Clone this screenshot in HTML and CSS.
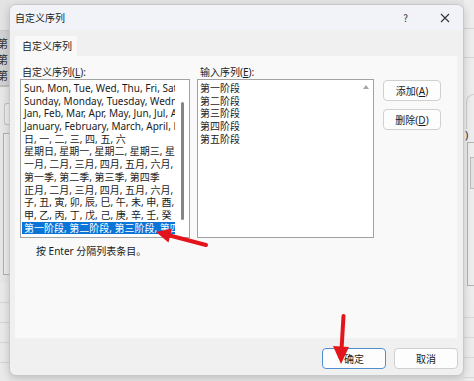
FILE: index.html
```html
<!DOCTYPE html>
<html lang="zh-CN">
<head>
  <meta charset="UTF-8">
  <title>自定义序列</title>
  <link rel="stylesheet" href="styles.css">
</head>
<body>
<div class="desk">
  <!-- 背后的工作表(左侧露出部分) -->
  <div class="sheet-left">
    <div class="sl-top"></div>
    <div class="sl-rows">
      <span>第</span><span>第</span><span>第</span>
    </div>
    <div class="sl-box"></div>
    <div class="sl-frame"></div>
    <div class="sl-grid"></div>
  </div>

  <!-- 对话框 -->
  <div class="dialog">
    <div class="titlebar">
      <span class="title">自定义序列</span>
      <span class="help">?</span>
      <span class="close">
        <svg width="10" height="10" viewBox="0 0 10 10"><path d="M1 1 L9 9 M9 1 L1 9" stroke="#333" stroke-width="1.1" fill="none"/></svg>
      </span>
    </div>

    <div class="tabs">
      <div class="tab">自定义序列</div>
    </div>

    <div class="panel">
      <div class="cols">
        <div class="col col-left">
          <label>自定义序列(<u>L</u>):</label>
          <div class="listbox">
            <div class="items">
              <div class="item">Sun, Mon, Tue, Wed, Thu, Fri, Sat</div>
              <div class="item">Sunday, Monday, Tuesday, Wednesday, Thursday</div>
              <div class="item">Jan, Feb, Mar, Apr, May, Jun, Jul, Aug, Sep</div>
              <div class="item">January, February, March, April, May, June</div>
              <div class="item">日, 一, 二, 三, 四, 五, 六</div>
              <div class="item">星期日, 星期一, 星期二, 星期三, 星期四</div>
              <div class="item">一月, 二月, 三月, 四月, 五月, 六月, 七月</div>
              <div class="item">第一季, 第二季, 第三季, 第四季</div>
              <div class="item">正月, 二月, 三月, 四月, 五月, 六月, 七月</div>
              <div class="item">子, 丑, 寅, 卯, 辰, 巳, 午, 未, 申, 酉, 戌, 亥</div>
              <div class="item">甲, 乙, 丙, 丁, 戊, 己, 庚, 辛, 壬, 癸</div>
              <div class="item selected">第一阶段, 第二阶段, 第三阶段, 第四阶段, 第五阶段</div>
            </div>
            <div class="vscroll"><div class="thumb"></div></div>
          </div>
        </div>

        <div class="col col-right">
          <label>输入序列(<u>E</u>):</label>
          <div class="listbox">
            <div class="items">
              <div class="item">第一阶段</div>
              <div class="item">第二阶段</div>
              <div class="item">第三阶段</div>
              <div class="item">第四阶段</div>
              <div class="item">第五阶段</div>
            </div>
            <div class="vscroll"><span class="up"></span></div>
          </div>
        </div>

        <div class="side-btns">
          <button class="btn">添加(<u>A</u>)</button>
          <button class="btn">删除(<u>D</u>)</button>
        </div>
      </div>

      <p class="hint">按 Enter 分隔列表条目。</p>
    </div>

    <div class="footer">
      <button class="btn btn-default">确定</button>
      <button class="btn">取消</button>
    </div>
  </div>

  <!-- 背后的工作表(右侧露出部分) -->
  <div class="sheet-right">
    <div class="sr-row"></div>
    <div class="sr-row"></div>
    <div class="sr-curve"></div>
    <div class="sr-paren">)</div>
    <div class="sr-frame"><div class="sr-inner"></div></div>
    <div class="sr-grid"></div>
  </div>
</div>

<!-- 标注箭头 -->
<svg class="marks" width="474" height="381" viewBox="0 0 474 381">
  <line x1="206" y1="245" x2="166" y2="234.5" stroke="#e3141b" stroke-width="4" stroke-linecap="round"/>
  <polygon points="156,232 172,228.5 168.5,242.5" fill="#e3141b"/>
  <line x1="343.5" y1="316" x2="341.5" y2="350" stroke="#e3141b" stroke-width="4" stroke-linecap="round"/>
  <polygon points="333,346 349,347 341,364" fill="#e3141b"/>
</svg>
</body>
</html>
```

FILE: styles.css
```css
/* 全体 */
html, body {
  margin: 0;
  padding: 0;
  width: 474px;
  height: 381px;
  overflow: hidden;
  background: #e6e6e6;
  font-family: "Noto Sans", "Noto Sans CJK SC", sans-serif;
  font-size: 10px;
  color: #1b1b1b;
}

.desk {
  display: flex;
  height: 381px;
}

/* 左侧工作表 */
.sheet-left {
  width: 9px;
  display: flex;
  flex-direction: column;
  overflow: hidden;
}
.sl-top {
  height: 30px;
  background: #e3e3e3;
  border-bottom: 1px solid #c9c9c9;
}
.sl-rows {
  height: 54px;
  background: #d2d2d2;
  display: flex;
  flex-direction: column;
  border-bottom: 2px solid #bdbdbd;
}
.sl-rows span {
  margin-left: -3px;
  font-family: "Noto Sans CJK SC", sans-serif;
  font-size: 11px;
  line-height: 16px;
  color: #333;
}
.sl-rows span:first-child {
  margin-top: 4px;
}
.sl-box {
  height: 20px;
  margin: 16px 0 0 4px;
  border: 1px solid #c2c2c2;
  border-right: none;
  border-radius: 3px 0 0 3px;
  background: #ededed;
}
.sl-frame {
  height: 140px;
  margin: 8px 0 0 3px;
  border: 1px solid #b0b0b0;
  border-right: none;
  background: #ececec;
}
.sl-grid {
  flex: 1;
  margin-top: 8px;
  background: repeating-linear-gradient(to bottom, #e9e9e9 0 19px, #d5d5d5 19px 20px);
}

/* 右侧工作表 */
.sheet-right {
  flex: 1;
  display: flex;
  flex-direction: column;
  background: #ededed;
}
.sr-row {
  height: 28px;
  border-bottom: 1px solid #d6d6d6;
}
.sr-curve {
  height: 34px;
  margin-top: 36px;
  border-top: 1px solid #cfcfcf;
  border-left: 1px solid #cfcfcf;
  border-radius: 14px 0 0 0;
  margin-left: 2px;
}
.sr-paren {
  height: 12px;
  line-height: 12px;
  font-size: 11px;
  color: #333;
  margin-left: 1px;
}
.sr-frame {
  height: 128px;
  margin: 1px 0 0 3px;
  border: 1px solid #b3b3b3;
  border-right: none;
  padding: 14px 0 0 2px;
}
.sr-inner {
  height: 30px;
  border: 1px solid #bcbcbc;
  border-right: none;
  background: #e2e2e2;
}
.sr-grid {
  flex: 1;
  margin-top: 12px;
  background: repeating-linear-gradient(to bottom, #ececec 0 19px, #d8d8d8 19px 20px);
}

/* 对话框 */
.dialog {
  box-sizing: border-box;
  width: 455px;
  height: 372px;
  margin-top: 4px;
  display: flex;
  flex-direction: column;
  background: #f0f0f0;
  border: 1px solid #c8c8c8;
  border-radius: 7px;
  box-shadow: 0 2px 8px rgba(0, 0, 0, 0.18);
  overflow: hidden;
  position: relative;
  z-index: 1;
}

/* 标题栏 */
.titlebar {
  height: 25px;
  display: flex;
  align-items: center;
  padding-left: 5px;
  background: #f1f3f8;
  font-family: "Noto Sans CJK SC", sans-serif;
}
.title {
  font-size: 10px;
}
.help {
  margin-left: auto;
  font-size: 10px;
  color: #333;
}
.close {
  display: flex;
  margin: 0 13px 0 32px;
}

/* 标签页 */
.tabs {
  height: 26px;
  display: flex;
  align-items: flex-end;
  padding-left: 5px;
}
.tab {
  width: 62px;
  height: 20px;
  line-height: 20px;
  box-sizing: border-box;
  padding-left: 7px;
  background: #f9f9f9;
  font-family: "Noto Sans CJK SC", sans-serif;
}

/* 面板 */
.panel {
  box-sizing: border-box;
  height: 282px;
  margin: 0 6px 0 5px;
  padding: 9px 5px 0 5px;
  background: #f9f9f9;
}
.cols {
  display: flex;
}
.col label {
  display: block;
  height: 14px;
  line-height: 14px;
  padding-left: 2px;
}
.col-left {
  width: 170px;
}
.col-right {
  width: 177px;
  margin-left: 7px;
}
.col-right label {
  padding-left: 3px;
}

.listbox {
  box-sizing: border-box;
  height: 159px;
  display: flex;
  border: 1px solid #a2a2a2;
  background: #fff;
}
.items {
  flex: 1;
  min-width: 0;
  padding: 2px 0 0 1px;
  overflow: hidden;
}
.item {
  line-height: 12.7px;
  height: 12.7px;
  padding-left: 2px;
  white-space: nowrap;
  overflow: hidden;
}
.item.selected {
  background: #0b74d6;
  color: #fff;
}
.col-right .items {
  padding-left: 0;
}
.vscroll {
  width: 14px;
  display: flex;
  flex-direction: column;
  align-items: center;
}
.col-left .vscroll {
  padding-top: 22px;
  padding-bottom: 17px;
}
.thumb {
  flex: 1;
  width: 3px;
  border-radius: 2px;
  background: #858585;
}
.up {
  margin-top: 5px;
  width: 0;
  height: 0;
  border-left: 3px solid transparent;
  border-right: 3px solid transparent;
  border-bottom: 4px solid #a6a6a6;
}

/* 按钮 */
.btn {
  box-sizing: border-box;
  height: 21px;
  padding: 0;
  border: 1px solid #d0d0d0;
  border-radius: 4px;
  background: #fdfdfd;
  font-family: "Noto Sans", "Noto Sans CJK SC", sans-serif;
  font-size: 10px;
  color: #1b1b1b;
}
.side-btns {
  display: flex;
  flex-direction: column;
  gap: 8px;
  width: 58px;
  margin: 15px 0 0 9px;
}

.hint {
  margin: 6px 0 0 16px;
  line-height: 14px;
}

/* 底部 */
.footer {
  flex: 1;
  display: flex;
  justify-content: flex-end;
  gap: 8px;
  padding: 10px 5px 0 0;
}
.footer .btn {
  width: 64px;
}
.btn-default {
  border-color: #4f8fd0;
}

/* 标注 */
.marks {
  position: absolute;
  left: 0;
  top: 0;
  z-index: 2;
  pointer-events: none;
}
```
